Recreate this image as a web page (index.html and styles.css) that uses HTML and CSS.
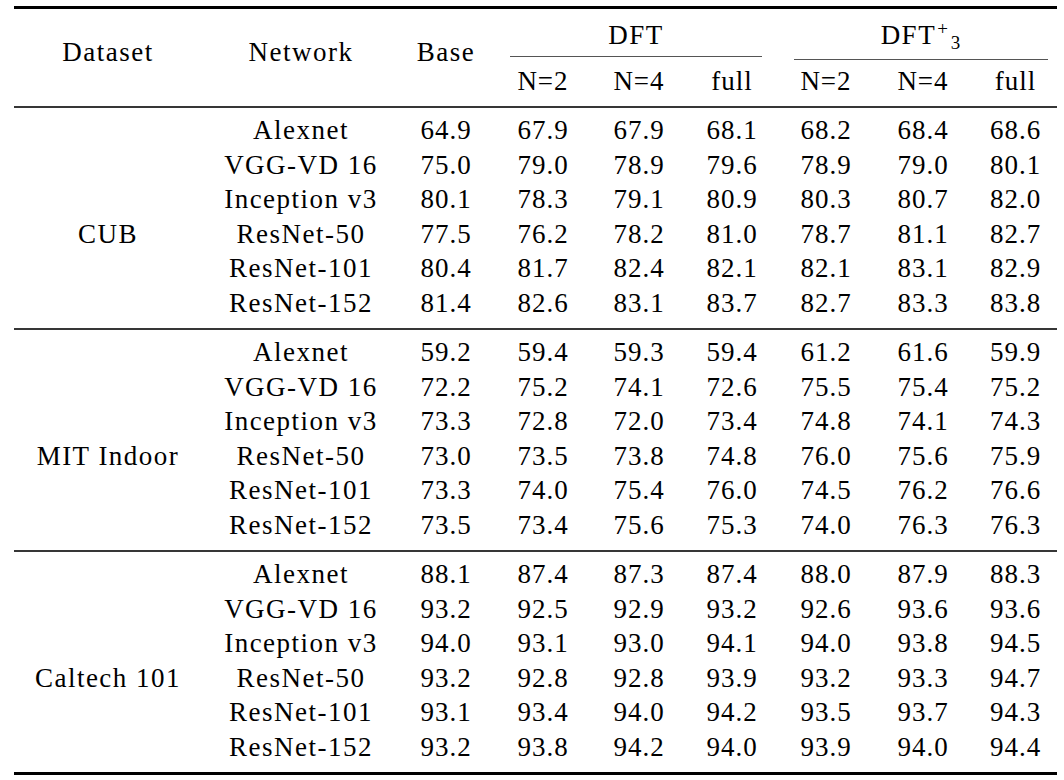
FILE: index.html
```html
<!DOCTYPE html>
<html lang="en">
<head>
<meta charset="utf-8">
<title>Results table</title>
<link rel="stylesheet" href="styles.css">
</head>
<body>
<div class="table">
  <div class="head">
    <div class="hcell word">Dataset</div>
    <div class="hcell word">Network</div>
    <div class="hcell word">Base</div>
    <div class="group-head dft">
      <div class="ghtext">DFT</div>
      <div class="cmid cmid-a"></div>
    </div>
    <div class="group-head dftp">
      <div class="ghtext">DFT<span class="sup">+</span><span class="sub">3</span></div>
      <div class="cmid cmid-b"></div>
    </div>
    <div class="sub-h">N=2</div>
    <div class="sub-h">N=4</div>
    <div class="sub-h">full</div>
    <div class="sub-h">N=2</div>
    <div class="sub-h">N=4</div>
    <div class="sub-h">full</div>
  </div>

  <div class="group">
    <div class="row"><div class="ds"></div><div class="net">Alexnet</div><div class="num">64.9</div><div class="num">67.9</div><div class="num">67.9</div><div class="num">68.1</div><div class="num">68.2</div><div class="num">68.4</div><div class="num">68.6</div></div>
    <div class="row"><div class="ds"></div><div class="net">VGG-VD 16</div><div class="num">75.0</div><div class="num">79.0</div><div class="num">78.9</div><div class="num">79.6</div><div class="num">78.9</div><div class="num">79.0</div><div class="num">80.1</div></div>
    <div class="row"><div class="ds"></div><div class="net">Inception v3</div><div class="num">80.1</div><div class="num">78.3</div><div class="num">79.1</div><div class="num">80.9</div><div class="num">80.3</div><div class="num">80.7</div><div class="num">82.0</div></div>
    <div class="row"><div class="ds">CUB</div><div class="net">ResNet-50</div><div class="num">77.5</div><div class="num">76.2</div><div class="num">78.2</div><div class="num">81.0</div><div class="num">78.7</div><div class="num">81.1</div><div class="num">82.7</div></div>
    <div class="row"><div class="ds"></div><div class="net">ResNet-101</div><div class="num">80.4</div><div class="num">81.7</div><div class="num">82.4</div><div class="num">82.1</div><div class="num">82.1</div><div class="num">83.1</div><div class="num">82.9</div></div>
    <div class="row"><div class="ds"></div><div class="net">ResNet-152</div><div class="num">81.4</div><div class="num">82.6</div><div class="num">83.1</div><div class="num">83.7</div><div class="num">82.7</div><div class="num">83.3</div><div class="num">83.8</div></div>
  </div>

  <div class="group">
    <div class="row"><div class="ds"></div><div class="net">Alexnet</div><div class="num">59.2</div><div class="num">59.4</div><div class="num">59.3</div><div class="num">59.4</div><div class="num">61.2</div><div class="num">61.6</div><div class="num">59.9</div></div>
    <div class="row"><div class="ds"></div><div class="net">VGG-VD 16</div><div class="num">72.2</div><div class="num">75.2</div><div class="num">74.1</div><div class="num">72.6</div><div class="num">75.5</div><div class="num">75.4</div><div class="num">75.2</div></div>
    <div class="row"><div class="ds"></div><div class="net">Inception v3</div><div class="num">73.3</div><div class="num">72.8</div><div class="num">72.0</div><div class="num">73.4</div><div class="num">74.8</div><div class="num">74.1</div><div class="num">74.3</div></div>
    <div class="row"><div class="ds">MIT Indoor</div><div class="net">ResNet-50</div><div class="num">73.0</div><div class="num">73.5</div><div class="num">73.8</div><div class="num">74.8</div><div class="num">76.0</div><div class="num">75.6</div><div class="num">75.9</div></div>
    <div class="row"><div class="ds"></div><div class="net">ResNet-101</div><div class="num">73.3</div><div class="num">74.0</div><div class="num">75.4</div><div class="num">76.0</div><div class="num">74.5</div><div class="num">76.2</div><div class="num">76.6</div></div>
    <div class="row"><div class="ds"></div><div class="net">ResNet-152</div><div class="num">73.5</div><div class="num">73.4</div><div class="num">75.6</div><div class="num">75.3</div><div class="num">74.0</div><div class="num">76.3</div><div class="num">76.3</div></div>
  </div>

  <div class="group last">
    <div class="row"><div class="ds"></div><div class="net">Alexnet</div><div class="num">88.1</div><div class="num">87.4</div><div class="num">87.3</div><div class="num">87.4</div><div class="num">88.0</div><div class="num">87.9</div><div class="num">88.3</div></div>
    <div class="row"><div class="ds"></div><div class="net">VGG-VD 16</div><div class="num">93.2</div><div class="num">92.5</div><div class="num">92.9</div><div class="num">93.2</div><div class="num">92.6</div><div class="num">93.6</div><div class="num">93.6</div></div>
    <div class="row"><div class="ds"></div><div class="net">Inception v3</div><div class="num">94.0</div><div class="num">93.1</div><div class="num">93.0</div><div class="num">94.1</div><div class="num">94.0</div><div class="num">93.8</div><div class="num">94.5</div></div>
    <div class="row"><div class="ds">Caltech 101</div><div class="net">ResNet-50</div><div class="num">93.2</div><div class="num">92.8</div><div class="num">92.8</div><div class="num">93.9</div><div class="num">93.2</div><div class="num">93.3</div><div class="num">94.7</div></div>
    <div class="row"><div class="ds"></div><div class="net">ResNet-101</div><div class="num">93.1</div><div class="num">93.4</div><div class="num">94.0</div><div class="num">94.2</div><div class="num">93.5</div><div class="num">93.7</div><div class="num">94.3</div></div>
    <div class="row"><div class="ds"></div><div class="net">ResNet-152</div><div class="num">93.2</div><div class="num">93.8</div><div class="num">94.2</div><div class="num">94.0</div><div class="num">93.9</div><div class="num">94.0</div><div class="num">94.4</div></div>
  </div>
</div>
</body>
</html>
```
FILE: styles.css
```css
html, body {
  margin: 0;
  padding: 0;
  background: #ffffff;
}

body {
  font-family: "Liberation Serif", "DejaVu Serif", serif;
  font-size: 27px;
  color: #000000;
}

.table {
  display: flex;
  flex-direction: column;
  width: 1043px;
  margin: 6px 0 0 14px;
}

.head,
.row {
  display: grid;
  grid-template-columns: 188px 198px 92px 102px 90px 96px 92px 102px 83px;
}

.head {
  border-top: 3px solid #000000;
  border-bottom: 2px solid #363636;
  grid-template-rows: 48px 49px;
}

.hcell {
  grid-row: 1 / span 2;
  text-align: center;
  line-height: 30px;
  padding-top: 28px;
}

.word {
  letter-spacing: 1.5px;
}

.group-head {
  grid-column: span 3;
  display: flex;
  flex-direction: column;
  padding-top: 11px;
}

.ghtext {
  text-align: center;
  line-height: 30px;
  letter-spacing: 1.5px;
}

.dftp .ghtext {
  padding-left: 4px;
}

.sup {
  font-size: 19px;
  position: relative;
  top: -9px;
  margin-left: 1px;
  letter-spacing: 0;
}

.sub {
  font-size: 19px;
  position: relative;
  top: 5px;
  letter-spacing: 0;
  margin-left: 3px;
}

.cmid {
  margin-top: 6px;
  border-top: 1px solid #555555;
}

.cmid-a {
  margin-left: 18px;
  margin-right: 18px;
}

.cmid-b {
  margin-left: 14px;
  margin-right: 9px;
}

.sub-h {
  text-align: center;
  line-height: 30px;
  padding-top: 9px;
  letter-spacing: 1px;
}

.group {
  display: flex;
  flex-direction: column;
  padding: 5px 0 8px;
  border-bottom: 2px solid #363636;
}

.group.last {
  border-bottom: 3px solid #000000;
}

.row {
  height: 34.5px;
  line-height: 34.5px;
}

.ds,
.net {
  text-align: center;
  letter-spacing: 1.5px;
  white-space: nowrap;
}

.num {
  text-align: center;
  letter-spacing: 1px;
}
```
